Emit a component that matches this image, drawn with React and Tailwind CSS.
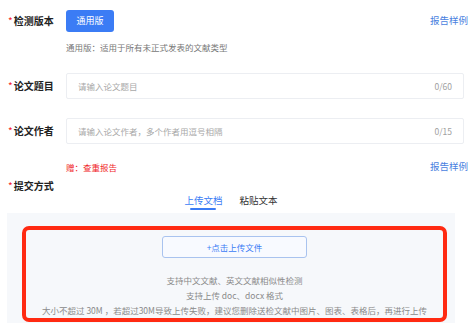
export default function App() {
  const font = "font-['Noto_Sans_CJK_SC','Noto_Sans',sans-serif]";
  const Label = ({ children, className = "" }) => (
    <div className={`w-[58px] shrink-0 flex items-center text-[10px] font-bold text-[#222] leading-none ${className}`}>
      <span className="text-[#f5222d] font-normal mr-[1px]">*</span>
      {children}
    </div>
  );
  return (
    <div className={`w-[474px] h-[323px] overflow-hidden bg-white ${font}`}>
      {/* row 1 */}
      <div className="flex items-center pt-[10px] ml-[8px] mr-[6px] h-[32px]">
        <Label className="h-[22px]">检测版本</Label>
        <div className="w-[48px] h-[22px] rounded-[3px] bg-[#3b7cf5] text-white text-[9px] flex items-center justify-center">
          通用版
        </div>
        <div className="ml-auto text-[9.5px] text-[#4a7fe0] leading-none">报告样例</div>
      </div>
      <div className="ml-[66px] mt-[9px] h-[12px] flex items-center text-[8.5px] text-[#777] leading-none">
        通用版：适用于所有未正式发表的文献类型
      </div>
      {/* title */}
      <div className="flex items-center ml-[8px] mt-[20px] h-[26px]">
        <Label className="h-[26px] w-[57px]">论文题目</Label>
        <div className="w-[398px] h-[26px] border border-[#eceef2] rounded-[2px] flex items-center px-[11px] text-[8.5px] leading-none">
          <span className="text-[#a8a8a8]">请输入论文题目</span>
          <span className="ml-auto text-[#a0a0a0]">0/60</span>
        </div>
      </div>
      {/* author */}
      <div className="flex items-center ml-[8px] mt-[19px] h-[26px]">
        <Label className="h-[26px] w-[57px]">论文作者</Label>
        <div className="w-[398px] h-[26px] border border-[#eceef2] rounded-[2px] flex items-center px-[11px] text-[8.5px] leading-none">
          <span className="text-[#a8a8a8]">请输入论文作者，多个作者用逗号相隔</span>
          <span className="ml-auto text-[#a0a0a0]">0/15</span>
        </div>
      </div>
      {/* gift */}
      <div className="flex items-center ml-[66px] mr-[6px] mt-[16px] h-[14px]">
        <span className="text-[8.5px] text-[#f0262a] leading-none">赠：查重报告</span>
        <span className="ml-auto text-[9.5px] text-[#4a7fe0] leading-none">报告样例</span>
      </div>
      <div className="flex items-center ml-[8px] mt-[5px] h-[14px]">
        <Label className="h-[14px]">提交方式</Label>
      </div>
      {/* tabs */}
      <div className="ml-[7px] w-[448px] flex justify-center gap-[17px] mt-[1px] h-[19px]">
        <div className="flex flex-col items-center">
          <span className="text-[9.5px] text-[#3b7cf5] leading-[12px] h-[14px]">上传文档</span>
          <span className="w-[26px] h-[2px] bg-[#3b7cf5] rounded-full"></span>
        </div>
        <div className="flex flex-col items-center">
          <span className="text-[9.5px] text-[#333] leading-[12px]">粘贴文本</span>
        </div>
      </div>
      {/* upload box */}
      <div className="ml-[7px] w-[448px] h-[120px] bg-[#f6f8fb] pt-[13px] pl-[15px] pr-[8px]">
        <div className="w-[425px] h-[96px] border-[4px] border-[#ff2a12] rounded-[7px] flex flex-col items-center">
          <div className="mt-[6px] w-[145px] h-[23px] border border-[#a9c3ef] rounded-[3px] bg-[#f8faff] flex items-center justify-center text-[8.5px] text-[#3b7cf5] leading-none">
            +点击上传文件
          </div>
          <div className="mt-[15px] flex flex-col items-center text-[8.5px] text-[#8a8a8a] leading-[15px] whitespace-nowrap">
            <span>支持中文文献、英文文献相似性检测</span>
            <span>支持上传 doc、docx 格式</span>
            <span>大小不超过 30M ，若超过30M导致上传失败，建议您删除送检文献中图片、图表、表格后，再进行上传</span>
          </div>
        </div>
      </div>
    </div>
  );
}
